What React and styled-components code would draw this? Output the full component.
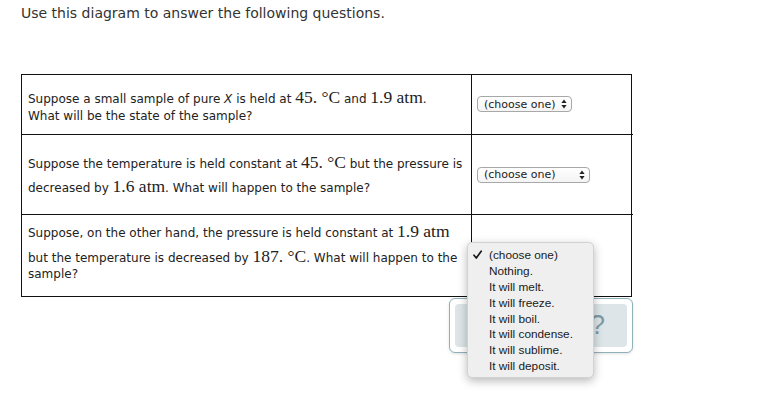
import React from "react";
import styled, { createGlobalStyle } from "styled-components";

const GlobalStyle = createGlobalStyle`
  html, body { margin: 0; padding: 0; background: #fff; }
  body { font-family: "DejaVu Sans", Verdana, sans-serif; color: #222; }
`;

const Page = styled.div`
  position: relative;
  width: 763px;
  height: 400px;
  padding: 4px 0 0 21px;
  box-sizing: border-box;
`;

const Title = styled.div`
  font-size: 14px;
  line-height: 19px;
  color: #333;
`;

const Table = styled.div`
  margin-top: 51px;
  width: 611px;
  display: grid;
  grid-template-columns: 450px 161px;
  grid-template-rows: ${(p) => p.$rows};
  border: 1px solid #111;
  box-sizing: border-box;
`;

const QCell = styled.div`
  display: flex;
  align-items: center;
  padding: 0 6px;
  border-right: 1px solid #111;
  border-bottom: ${(p) => (p.$last ? "none" : "1px solid #111")};
  font-size: 12px;
  color: #222;
  white-space: nowrap;
`;

const ACell = styled.div`
  display: flex;
  align-items: center;
  padding-left: 5px;
  border-bottom: ${(p) => (p.$last ? "none" : "1px solid #111")};
`;

const QText = styled.div`
  margin-top: ${(p) => p.$mt || "0"};
`;

const Line = styled.div`
  height: ${(p) => p.$h}px;
  line-height: ${(p) => p.$h}px;
`;

const Math = styled.span`
  font-family: "Liberation Serif", "Times New Roman", serif;
  font-size: 17.5px;
`;

const Select = styled.div`
  display: flex;
  align-items: center;
  justify-content: space-between;
  box-sizing: border-box;
  width: ${(p) => p.$w}px;
  height: 16px;
  padding: 0 4px 0 6px;
  border: 1px solid #a8a8a8;
  border-radius: 4px;
  background: linear-gradient(#ffffff, #f4f4f4);
  font-size: 11px;
  color: #222;
  margin-top: ${(p) => p.$mt || "0"};
`;

const Footer = styled.div`
  width: 612px;
  display: flex;
  justify-content: flex-end;
  margin-top: 1px;
`;

const ButtonGroup = styled.div`
  width: 184px;
  height: 55px;
  box-sizing: border-box;
  border: 1px solid #8fb1ba;
  border-radius: 6px;
  padding: 5px;
  background: #fff;
  box-shadow: 0 1px 3px rgba(0, 0, 0, 0.12);
`;

const ButtonFill = styled.div`
  height: 100%;
  border-radius: 4px;
  background: #dde5e8;
  display: flex;
  align-items: center;
  justify-content: flex-end;
  padding-right: 22px;
  font-family: "Liberation Sans", Arial, sans-serif;
  font-size: 27px;
  font-weight: 300;
  color: #7d9ba4;
`;

const Menu = styled.div`
  position: absolute;
  left: 467px;
  top: 242px;
  width: 127px;
  height: 136px;
  box-sizing: border-box;
  padding: 4px 0;
  background: #efefef;
  border: 1px solid #d2d2d2;
  border-radius: 5px;
  box-shadow: 0 3px 10px rgba(0, 0, 0, 0.28);
  font-family: "Liberation Sans", Arial, sans-serif;
  font-size: 11.8px;
  color: #1a1a1a;
`;

const MenuItem = styled.div`
  display: flex;
  align-items: center;
  height: 15.9px;
  padding-left: 21px;
  position: relative;
`;

const Check = styled.svg`
  position: absolute;
  left: 4px;
  top: 3px;
`;

const Arrows = () => (
  <svg width="6" height="10" viewBox="0 0 6 10">
    <path d="M3 0.5 L5.6 4 H0.4 Z" fill="#222" />
    <path d="M3 9.5 L5.6 6 H0.4 Z" fill="#222" />
  </svg>
);

const options = [
  "(choose one)",
  "Nothing.",
  "It will melt.",
  "It will freeze.",
  "It will boil.",
  "It will condense.",
  "It will sublime.",
  "It will deposit.",
];

export default function App() {
  return (
    <>
      <GlobalStyle />
      <Page>
        <Title>Use this diagram to answer the following questions.</Title>
        <Table $rows="60px 80px 81px">
          <QCell>
            <QText $mt="4px">
              <Line $h={19}>
                Suppose a small sample of pure <i>X</i> is held at <Math>45. °C</Math> and{" "}
                <Math>1.9 atm</Math>.
              </Line>
              <Line $h={19}>What will be the state of the sample?</Line>
            </QText>
          </QCell>
          <ACell>
            <Select $w={95} $mt="-1px">
              <span>(choose one)</span>
              <Arrows />
            </Select>
          </ACell>
          <QCell>
            <QText $mt="-2px">
              <Line $h={24}>
                Suppose the temperature is held constant at <Math>45. °C</Math> but the pressure is
              </Line>
              <Line $h={24}>
                decreased by <Math>1.6 atm</Math>. What will happen to the sample?
              </Line>
            </QText>
          </QCell>
          <ACell>
            <Select $w={113}>
              <span>(choose one)</span>
              <Arrows />
            </Select>
          </ACell>
          <QCell $last>
            <QText $mt="-13px">
              <Line $h={30}>
                Suppose, on the other hand, the pressure is held constant at <Math>1.9 atm</Math>
              </Line>
              <Line $h={20}>
                but the temperature is decreased by <Math>187. °C</Math>. What will happen to the
              </Line>
              <Line $h={16}>sample?</Line>
            </QText>
          </QCell>
          <ACell $last />
        </Table>
        <Footer>
          <ButtonGroup>
            <ButtonFill>?</ButtonFill>
          </ButtonGroup>
        </Footer>
        <Menu>
          {options.map((o, i) => (
            <MenuItem key={o}>
              {i === 0 && (
                <Check width="11" height="10" viewBox="0 0 11 10">
                  <path
                    d="M2 5.2 L4.3 8 L9.2 1.2"
                    fill="none"
                    stroke="#1a1a1a"
                    strokeWidth="1.7"
                    strokeLinecap="round"
                    strokeLinejoin="round"
                  />
                </Check>
              )}
              {o}
            </MenuItem>
          ))}
        </Menu>
      </Page>
    </>
  );
}
